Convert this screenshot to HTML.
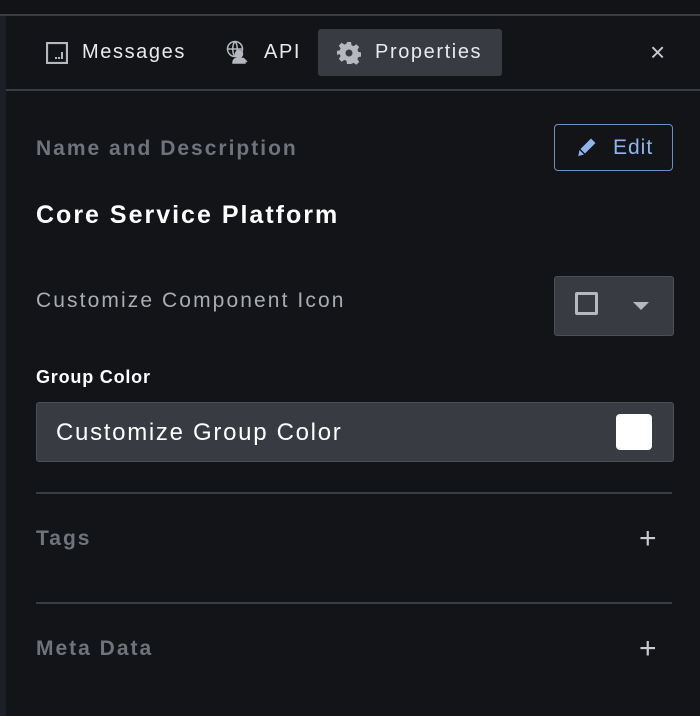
<!DOCTYPE html>
<html><head><style>
body{margin:0;width:700px;height:716px;background:#121418;font-family:"Liberation Sans",sans-serif;position:relative;overflow:hidden}
.a{position:absolute}
.t{color:#e8eaed;font-size:20px;letter-spacing:1.6px;top:41px}
.lbl{color:#6f737b;font-size:21px;font-weight:bold;letter-spacing:2px}
</style></head><body>
<div class="a" style="left:0;top:0;width:700px;height:14px;background:#111317"></div>
<div class="a" style="left:0;top:14px;width:700px;height:2px;background:#393d45"></div>
<div class="a" style="left:0;top:16px;width:6px;height:700px;background:#1c1f25"></div>
<div class="a" style="left:6px;top:89px;width:694px;height:2px;background:#393d45"></div>

<svg class="a" style="left:46px;top:42px" width="22" height="22" viewBox="0 0 22 22"><rect x="1" y="1" width="20" height="20" fill="none" stroke="#b5b8be" stroke-width="2.2"/><rect x="9" y="15" width="2" height="2" fill="#b5b8be"/><rect x="12" y="15" width="2" height="2" fill="#b5b8be"/><rect x="15" y="10" width="2" height="7" fill="#b5b8be"/></svg>
<div class="a t" style="left:82px">Messages</div>
<svg class="a" style="left:226px;top:40px" width="24" height="24" viewBox="0 0 24 24" fill="none" stroke="#b5b8be" stroke-width="1.5"><circle cx="9" cy="9" r="7.5"/><path d="M1.5 9h15M9 1.5c-3 3-3 12 0 15M9 1.5c3 3 3 12 0 15"/><circle cx="13" cy="14" r="3.5" fill="#b5b8be"/><path d="M7 23c0-4 3-5 6-5s6 1 6 5z" fill="#b5b8be"/><path d="M17 18l4 4"/></svg>
<div class="a t" style="left:264px">API</div>
<div class="a" style="left:318px;top:29px;width:184px;height:47px;background:#383b42;border-radius:3px"></div>
<svg class="a" style="left:337px;top:41px" width="24" height="24" viewBox="0 0 24 24"><path fill="#b5b8be" d="M10 1h4l.6 3.2 2 .9 2.8-1.8 2.8 2.8-1.8 2.8.9 2 3.2.6v4l-3.2.6-.9 2 1.8 2.8-2.8 2.8-2.8-1.8-2 .9L14 23h-4l-.6-3.2-2-.9-2.8 1.8-2.8-2.8 1.8-2.8-.9-2L-.5 14v-4l3.2-.6.9-2L1.8 4.6l2.8-2.8 2.8 1.8 2-.9z"/><circle cx="12" cy="12" r="3.5" fill="#383b42"/></svg>
<div class="a t" style="left:375px">Properties</div>
<div class="a" style="left:650px;top:37px;color:#c8cacf;font-size:26px">×</div>

<div class="a lbl" style="left:36px;top:137px">Name and Description</div>
<div class="a" style="left:554px;top:124px;width:117px;height:45px;border:1.5px solid #6f8fbf;border-radius:4px"></div>
<svg class="a" style="left:577px;top:137px" width="20" height="20" viewBox="0 0 20 20"><path fill="#8fb4ef" d="M14 1.5l4.5 4.5L8 16.5 3.5 12zM2.5 13l4.5 4.5-4.8 1.3-1 .7z"/></svg>
<div class="a" style="left:613px;top:136px;color:#8fb4ef;font-size:21px;letter-spacing:1px">Edit</div>
<div class="a" style="left:36px;top:201px;color:#fff;font-size:25px;font-weight:bold;letter-spacing:2px">Core Service Platform</div>
<div class="a" style="left:36px;top:289px;color:#a9acb2;font-size:21px;letter-spacing:2.1px">Customize Component Icon</div>
<div class="a" style="left:554px;top:276px;width:118px;height:58px;background:#383b42;border:1.5px solid #4b4f57;border-radius:3px"></div>
<div class="a" style="left:575px;top:292px;width:23px;height:23px;border:3px solid #b5b8be;border-radius:2px;box-sizing:border-box"></div>
<div class="a" style="left:633px;top:302px;width:0;height:0;border-left:8px solid transparent;border-right:8px solid transparent;border-top:8px solid #b5b8be"></div>
<div class="a" style="left:36px;top:367px;color:#fff;font-size:18px;font-weight:bold;letter-spacing:.8px">Group Color</div>
<div class="a" style="left:36px;top:402px;width:636px;height:58px;background:#383b42;border:1.5px solid #4b4f57;border-radius:3px"></div>
<div class="a" style="left:56px;top:419px;color:#fff;font-size:24px;letter-spacing:1.7px">Customize Group Color</div>
<div class="a" style="left:616px;top:414px;width:36px;height:36px;background:#fff;border-radius:4px"></div>
<div class="a" style="left:36px;top:492px;width:636px;height:2px;background:#393d45"></div>
<div class="a lbl" style="left:36px;top:527px">Tags</div>
<div class="a" style="left:639px;top:522px;color:#c8cacf;font-size:30px">+</div>
<div class="a" style="left:36px;top:602px;width:636px;height:2px;background:#393d45"></div>
<div class="a lbl" style="left:36px;top:637px">Meta Data</div>
<div class="a" style="left:639px;top:632px;color:#c8cacf;font-size:30px">+</div>
</body></html>
